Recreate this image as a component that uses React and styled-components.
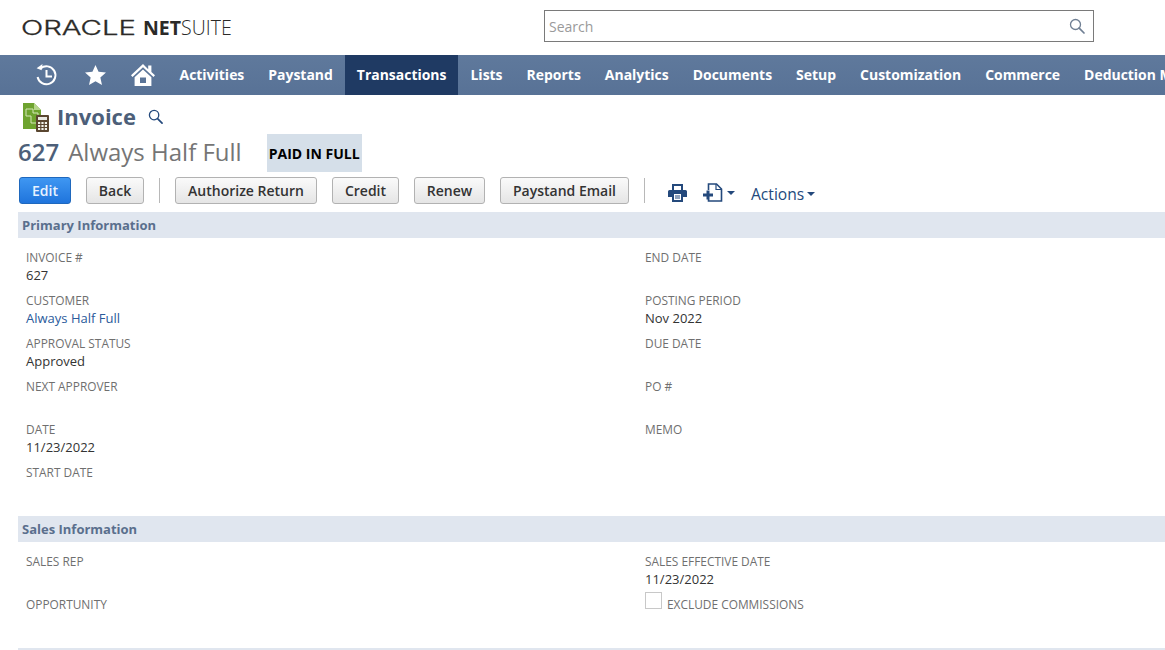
import React from 'react';
import styled, { createGlobalStyle } from 'styled-components';

const GlobalStyle = createGlobalStyle`
  html, body {
    margin: 0;
    padding: 0;
    background: #fff;
    overflow: hidden;
  }
  body {
    font-family: 'Open Sans', 'Liberation Sans', sans-serif;
    color: #262626;
    -webkit-font-smoothing: antialiased;
  }
  * {
    box-sizing: border-box;
  }
`;

const Page = styled.div`
  width: 1165px;
  height: 650px;
  overflow: hidden;
  position: relative;
`;

const Header = styled.header`
  height: 55px;
  display: flex;
  align-items: center;
  padding-left: 21px;
`;

const Logo = styled.div`
  width: 523px;
  display: flex;
  align-items: center;
  color: #2b2a28;
  line-height: 20px;
`;

const LogoOracle = styled.span`
  font-family: 'Inter', sans-serif;
  font-size: 19.5px;
  font-weight: 300;
  display: inline-block;
  transform: scaleX(1.5);
  transform-origin: left center;
  width: 122px;
  -webkit-text-stroke: 0.3px #2b2a28;
`;

const LogoSuite = styled.span`
  font-size: 19.5px;
  font-weight: 700;
  span {
    font-weight: 300;
  }
`;

const SearchBox = styled.div`
  width: 550px;
  height: 32px;
  margin-bottom: 3px;
  border: 1px solid #7a7a7a;
  display: flex;
  align-items: center;
  justify-content: space-between;
  padding: 0 8px 0 4px;
  font-size: 14px;
  color: #9a9a9a;
`;

const Nav = styled.nav`
  height: 40px;
  background: linear-gradient(#5f799c, #587296);
  display: flex;
  align-items: stretch;
  padding-left: 35px;
  white-space: nowrap;
  overflow: hidden;
`;

const NavIcon = styled.span`
  display: flex;
  align-items: center;
  margin-right: ${(p) => p.$gap}px;
`;

const NavItem = styled.a`
  display: flex;
  align-items: center;
  padding: 0 12px;
  color: #fff;
  font-size: 13.96px;
  font-weight: 700;
  background: ${(p) => (p.$active ? '#1f3a63' : 'transparent')};
`;

const NavText = styled.span`
  margin-top: -2px;
`;

const Content = styled.main`
  padding-left: 18px;
`;

const TitleRow = styled.div`
  height: 39px;
  display: flex;
  align-items: center;
  padding: 4px 0 0 4px;
`;

const Title = styled.h1`
  margin: -2px 12px 0 8px;
  font-size: 22px;
  line-height: 32px;
  font-weight: 700;
  color: #4d5f79;
`;

const RecordRow = styled.div`
  height: 38px;
  display: flex;
  align-items: center;
`;

const RecordNumber = styled.span`
  font-size: 24px;
  line-height: 36px;
  font-weight: 600;
  color: #4d5f79;
  margin: -2px 9px 0 0;
`;

const RecordName = styled.span`
  font-size: 24px;
  line-height: 36px;
  color: #757575;
  margin: -2px 25px 0 0;
`;

const StatusBadge = styled.span`
  height: 38px;
  width: 95px;
  display: flex;
  align-items: center;
  justify-content: center;
  background: #d5dfe9;
  color: #000;
  font-size: 14px;
  font-weight: 700;
`;

const Toolbar = styled.div`
  height: 27px;
  margin-top: 5px;
  padding-left: 1px;
  display: flex;
  align-items: center;
  gap: 15px;
`;

const Button = styled.button`
  height: 27px;
  width: ${(p) => p.$width}px;
  padding: 0;
  border-radius: 3px;
  font-family: inherit;
  font-size: 14px;
  font-weight: 600;
  border: 1px solid ${(p) => (p.$primary ? '#1f68bd' : '#b2b2b2')};
  color: ${(p) => (p.$primary ? '#e8f2ff' : '#333')};
  background: ${(p) =>
    p.$primary
      ? 'linear-gradient(#3f97f2, #1f74dc)'
      : 'linear-gradient(#fafafa, #e5e5e5)'};
`;

const Divider = styled.span`
  width: 1px;
  height: 25px;
  background: #b8b8b8;
`;

const ToolIcons = styled.div`
  display: flex;
  align-items: center;
  margin-left: 8px;
  gap: 16px;
  color: #24497c;
`;

const Caret = styled.span`
  display: inline-block;
  width: 0;
  height: 0;
  border-left: 4.5px solid transparent;
  border-right: 4.5px solid transparent;
  border-top: 4.5px solid #24497c;
  margin-left: 3px;
`;

const ToolIcon = styled.span`
  display: flex;
  align-items: center;
  margin-top: 4px;
`;

const Actions = styled.span`
  display: flex;
  align-items: center;
  font-size: 15.6px;
  line-height: 20px;
  color: #24497c;
  margin: 6px 0 0 0;
`;

const SectionHeader = styled.h2`
  height: 26px;
  margin: ${(p) => p.$top}px 0 0;
  padding-left: 4px;
  background: #e0e6ef;
  font-size: 13px;
  line-height: 26px;
  font-weight: 700;
  color: #5a6f8d;
`;

const FieldGrid = styled.div`
  display: grid;
  grid-template-columns: 619px 1fr;
  grid-auto-rows: 43px;
  padding: 10px 0 0 8px;
`;

const Field = styled.div`
  display: flex;
  flex-direction: column;
`;

const Label = styled.span`
  font-size: 11.9px;
  line-height: 18px;
  color: #6f6f6f;
`;

const Value = styled.span`
  font-size: 13px;
  line-height: 18px;
  color: ${(p) => (p.$link ? '#2a5a9b' : '#333')};
`;

const CheckRow = styled.div`
  display: flex;
  align-items: flex-end;
  gap: 5px;
  height: 20px;
  margin-top: -2px;
`;

const CheckBox = styled.span`
  width: 17px;
  height: 17px;
  border: 1px solid #c8c8c8;
  margin-bottom: 4px;
`;

const BottomRule = styled.div`
  height: 2px;
  background: #e0e6ef;
  position: absolute;
  left: 18px;
  right: 0;
  bottom: 0;
`;

const SearchGlass = ({ size, color, width }) => (
  <svg width={size} height={size} viewBox="0 0 16 16" fill="none">
    <circle cx="6.5" cy="6.5" r="5" stroke={color} strokeWidth={width} />
    <path d="M10.2 10.2 15 15" stroke={color} strokeWidth={width + 0.4} strokeLinecap="round" />
  </svg>
);

const HistoryIcon = () => (
  <svg width="23" height="24" viewBox="0 0 23 24" fill="none" stroke="#fff" strokeWidth="2">
    <path d="M5.5 5.5A9 9 0 1 1 2.6 14" />
    <path d="M7.5 1 6.6 7.2 1.6 5.2" fill="#fff" stroke="none" />
    <path d="M11.5 7v6.5H17" />
  </svg>
);

const StarIcon = () => (
  <svg width="21" height="20" viewBox="0 0 22 21" fill="#fff">
    <path d="M11 0l3.2 7.2 7.8.8-5.900 5.200 1.700 7.700L11 17l-6.800 3.900 1.700-7.700L0 8l7.800-.8z" />
  </svg>
);

const HomeIcon = () => (
  <svg width="24" height="22" viewBox="0 0 24 22" fill="#fff">
    <path d="M12 0 0 11.3l1.5 1.6L12 3.2l10.5 9.7 1.5-1.6-3.6-3.4V1.5h-3.2v3.7z" />
    <path fillRule="evenodd" d="M12 5.4 3.6 13.200V22h16.800v-8.800zM9 13.500h6V19H9z" />
  </svg>
);

const InvoiceIcon = () => (
  <svg width="27" height="30" viewBox="0 0 27 30">
    <path d="M1 1h11l7 7v19H1z" fill="#6ea32f" />
    <path d="M12 1l7 7h-7z" fill="#b6d58c" />
    <path d="M4 7h7v4h5v10H9v-7H4z" fill="none" stroke="#d3e6b8" strokeWidth="1" />
    <rect x="14" y="13" width="13" height="17" rx="1" fill="#5a4630" />
    <rect x="16" y="15" width="9" height="3" fill="#e9e9e2" />
    <path d="M16 20h2.2v2H16zM19.4 20h2.2v2h-2.2zM22.8 20H25v2h-2.2zM16 23h2.2v2H16zM19.4 23h2.2v2h-2.2zM22.8 23H25v2h-2.2zM16 26h2.2v2H16zM19.4 26h2.2v2h-2.2zM22.8 26H25v2h-2.2z" fill="#f2f2ea" />
  </svg>
);

const PrintIcon = () => (
  <svg width="19" height="18" viewBox="0 0 19 18" fill="#24497c">
    <path fillRule="evenodd" d="M4 0h11v6h2.500A1.500 1.500 0 0 1 19 7.500V13h-4v5H4v-5H0V7.500A1.500 1.500 0 0 1 1.500 6H4zM6 2v4h7V2zM6 10v6h7v-6z" />
    <path d="M7 11.500h5v1H7zM7 13.500h5v1H7z" />
  </svg>
);

const NewDocIcon = () => (
  <svg width="21" height="19" viewBox="0 0 21 19" fill="none" stroke="#24497c" strokeWidth="1.600">
    <path d="M5.500 7V1h8l5 5v12h-13v-2" />
    <path d="M13 1v5.500h5.500" strokeWidth="1.200" />
    <path d="M0 12h10M5 7.500v9" strokeWidth="3" />
  </svg>
);

const NAV_ITEMS = ['Activities', 'Paystand', 'Transactions', 'Lists', 'Reports', 'Analytics', 'Documents', 'Setup', 'Customization', 'Commerce', 'Deduction Management'];

const PRIMARY_FIELDS = [
  { label: 'INVOICE #', value: '627' },
  { label: 'END DATE' },
  { label: 'CUSTOMER', value: 'Always Half Full', link: true },
  { label: 'POSTING PERIOD', value: 'Nov 2022' },
  { label: 'APPROVAL STATUS', value: 'Approved' },
  { label: 'DUE DATE' },
  { label: 'NEXT APPROVER' },
  { label: 'PO #' },
  { label: 'DATE', value: '11/23/2022' },
  { label: 'MEMO' },
  { label: 'START DATE' },
];

const BUTTONS = [
  { text: 'Edit', width: 52, primary: true },
  { text: 'Back', width: 58 },
  { divider: true },
  { text: 'Authorize Return', width: 142 },
  { text: 'Credit', width: 67 },
  { text: 'Renew', width: 71 },
  { text: 'Paystand Email', width: 129 },
  { divider: true },
];

const App = () => {
  return (
    <Page>
      <GlobalStyle />
      <Header>
        <Logo>
          <LogoOracle>ORACLE</LogoOracle>
          <LogoSuite>NET<span>SUITE</span></LogoSuite>
        </Logo>
        <SearchBox>
          Search
          <SearchGlass size={16} color="#6f7f93" width={1.300} />
        </SearchBox>
      </Header>

      <Nav>
        <NavIcon $gap={27}><HistoryIcon /></NavIcon>
        <NavIcon $gap={25}><StarIcon /></NavIcon>
        <NavIcon $gap={12.5}><HomeIcon /></NavIcon>
        {NAV_ITEMS.map((item) => (
          <NavItem key={item} $active={item === 'Transactions'}>
            <NavText>{item}</NavText>
          </NavItem>
        ))}
      </Nav>

      <Content>
        <TitleRow>
          <InvoiceIcon />
          <Title>Invoice</Title>
          <SearchGlass size={15} color="#24497c" width={1.400} />
        </TitleRow>
        <RecordRow>
          <RecordNumber>627</RecordNumber>
          <RecordName>Always Half Full</RecordName>
          <StatusBadge>PAID IN FULL</StatusBadge>
        </RecordRow>
        <Toolbar>
          {BUTTONS.map((b, i) =>
            b.divider ? (
              <Divider key={i} />
            ) : (
              <Button key={b.text} $width={b.width} $primary={b.primary}>{b.text}</Button>
            )
          )}
          <ToolIcons>
            <ToolIcon><PrintIcon /></ToolIcon>
            <ToolIcon>
              <NewDocIcon />
              <Caret />
            </ToolIcon>
            <Actions>Actions<Caret /></Actions>
          </ToolIcons>
        </Toolbar>

        <SectionHeader $top={8}>Primary Information</SectionHeader>
        <FieldGrid>
          {PRIMARY_FIELDS.map((f) => (
            <Field key={f.label}>
              <Label>{f.label}</Label>
              {f.value && <Value $link={f.link}>{f.value}</Value>}
            </Field>
          ))}
        </FieldGrid>

        <SectionHeader $top={10}>Sales Information</SectionHeader>
        <FieldGrid>
          <Field><Label>SALES REP</Label></Field>
          <Field>
            <Label>SALES EFFECTIVE DATE</Label>
            <Value>11/23/2022</Value>
          </Field>
          <Field><Label>OPPORTUNITY</Label></Field>
          <CheckRow>
            <CheckBox />
            <Label>EXCLUDE COMMISSIONS</Label>
          </CheckRow>
        </FieldGrid>
      </Content>
      <BottomRule />
    </Page>
  );
};

export default App;
